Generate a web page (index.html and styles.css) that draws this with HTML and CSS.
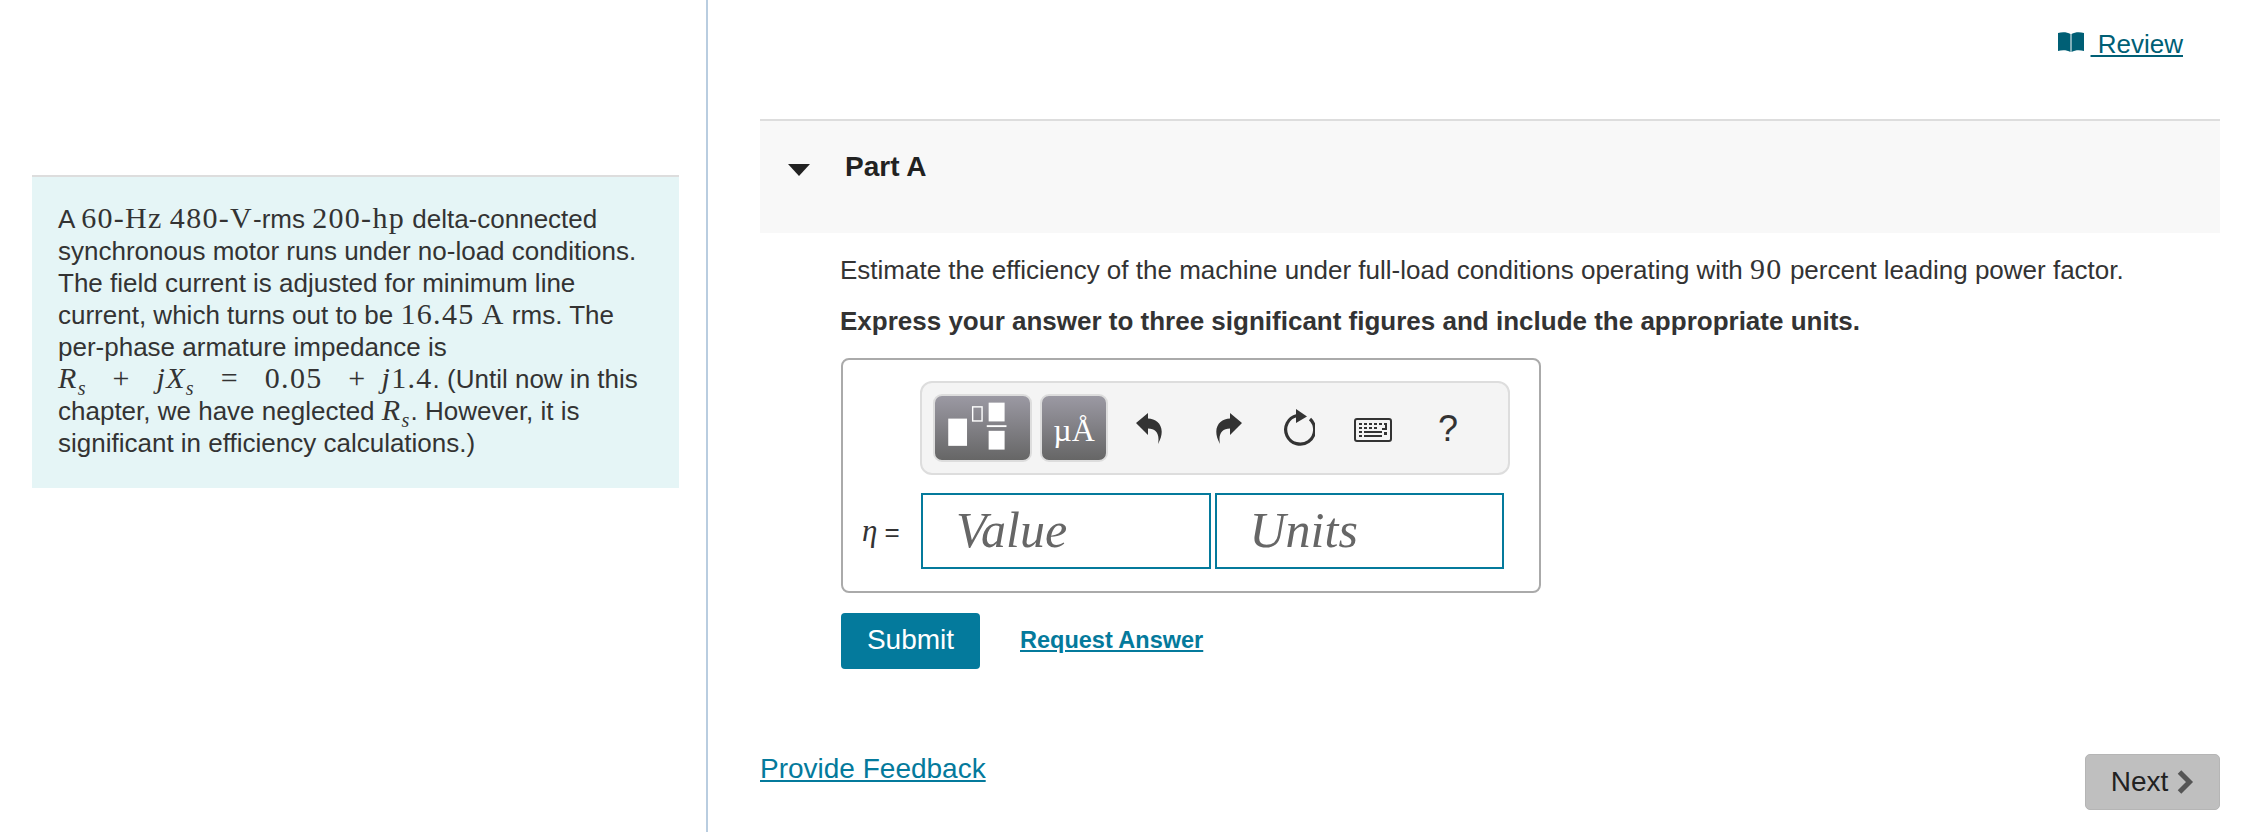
FILE: index.html

```html
<!DOCTYPE html>
<html>
<head>
    <meta charset="UTF-8">
    <title>Part A</title>
    <link rel="stylesheet" href="styles.css">
</head>
<body>

    <div class="page">

        <div class="intro-pane">
            <div class="intro">
                A <span class="math">60-Hz</span> <span class="math">480-V</span>-rms <span class="math">200-hp</span> delta-connected synchronous motor runs under no-load conditions. The field current is adjusted for minimum line current, which turns out to be <span class="math">16.45 A</span> rms. The per-phase armature impedance is<br>
                <span class="math wide"><i>R<sub>s</sub></i> <span class="op">+</span> <i>jX<sub>s</sub></i> <span class="op">=</span> 0.05 <span class="op">+</span><i>j</i>1.4</span>. (Until now in this chapter, we have neglected <span class="math"><i>R<sub>s</sub></i></span>. However, it is significant in efficiency calculations.)
            </div>
        </div>

        <div class="main-pane">

            <div class="review-row">
                <a href="#" class="review">
                    <svg class="book" viewBox="0 0 26 20" width="26" height="20">
                        <path d="M0 1 C4 0 9 0 12.500 2 V20 C9 18 4 18 0 19 Z"/>
                        <path d="M26 1 C22 0 17 0 13.500 2 V20 C17 18 22 18 26 19 Z"/>
                    </svg><span class="review-text">&nbsp;Review</span>
                </a>
            </div>

            <div class="part-head">
                <span class="caret"></span>
                <span class="part-title">Part A</span>
            </div>

            <div class="part-body">
                <p class="question">Estimate the efficiency of the machine under full-load conditions operating with <span class="math">90</span> percent leading power factor.</p>
                <p class="instruction">Express your answer to three significant figures and include the appropriate units.</p>

                <div class="answer-box">
                    <div class="toolbar">
                        <span class="tool-btn tool-templates">
                            <svg viewBox="0 0 98 66" width="94" height="62">
                                <rect x="12" y="23" width="20" height="29" fill="#fff"/>
                                <rect x="38" y="10.500" width="10" height="15" fill="none" stroke="#fff" stroke-width="1.500"/>
                                <rect x="55" y="6" width="17" height="20" fill="#fff"/>
                                <rect x="53" y="30" width="21" height="2" fill="#fff"/>
                                <rect x="55" y="36" width="17" height="20" fill="#fff"/>
                            </svg>
                        </span>
                        <span class="tool-btn tool-units">&micro;&Aring;</span>

                        <svg class="tool tool-undo" viewBox="0 0 28 32" width="28" height="32">
                            <path d="M0 11 L12 1 V6.500 C22 6.500 31 16 22 32 C24 22 20 16.500 12 16.500 V23 Z"/>
                        </svg>
                        <svg class="tool tool-redo" viewBox="0 0 28 32" width="28" height="32">
                            <path d="M28 11 L16 1 V6.500 C6 6.500 -3 16 6 32 C4 22 8 16.500 16 16.500 V23 Z"/>
                        </svg>
                        <svg class="tool tool-reset" viewBox="0 0 32 37" width="32" height="37">
                            <path d="M27 10 A14.500 14.500 0 1 1 14 6.500" fill="none" stroke="#333" stroke-width="3.200"/>
                            <path d="M13 0 L24 7.500 L13 14 Z"/>
                        </svg>
                        <svg class="tool tool-keys" viewBox="0 0 38 24" width="38" height="24">
                            <rect x="1" y="1" width="36" height="22" rx="2" fill="none" stroke="#333" stroke-width="2"/>
                            <path d="M5 5h3v2h-3zM10 5h3v2h-3zM15 5h3v2h-3zM20 5h3v2h-3zM25 5h3v2h-3zM30 5h3v7h-5v-2h3v-3h-1zM5 9h3v2h-3zM10 9h3v2h-3zM15 9h3v2h-3zM20 9h3v2h-3zM5 13h3v2h-3zM10 13h18v2h-18zM30 14h3v3h-3zM5 17h3v2h-3zM10 17h18v2h-18z"/>
                        </svg>
                        <span class="tool-help">?</span>
                    </div>

                    <div class="answer-row">
                        <span class="answer-label"><i>&eta;</i> =</span>
                        <span class="field">Value</span>
                        <span class="field">Units</span>
                    </div>
                </div>

                <div class="actions">
                    <a href="#" class="submit">Submit</a>
                    <a href="#" class="request">Request Answer</a>
                </div>
            </div>

            <div class="footer-row">
                <a href="#" class="feedback">Provide Feedback</a>
                <a href="#" class="next">Next
                    <svg viewBox="0 0 18 26" width="18" height="26">
                        <path d="M3.500 3 L13.500 13 L3.500 23" fill="none" stroke="#555" stroke-width="5"/>
                    </svg>
                </a>
            </div>

        </div>

    </div>

</body>
</html>
```

FILE: styles.css

```css
html {
    font-family: "Liberation Sans", Arial, Helvetica, sans-serif;
    box-sizing: border-box;
}

*,
*:before,
*:after {
    box-sizing: inherit;
}

body {
    margin: 0;
    color: #333;
    font-size: 26px;
    background: #fff;
}

a {
    color: #047a9c;
}

.page {
    display: flex;
    height: 832px;
    overflow: hidden;
}

.math {
    font-family: "Liberation Serif", "Times New Roman", serif;
    font-size: 30px;
    letter-spacing: 1.300px;
    line-height: 0;
}

.math sub {
    font-size: 20px;
    line-height: 0;
}

.math .op {
    margin: 0 15px;
    font-style: normal;
}

.math.wide {
    word-spacing: 2px;
}

/* left column */
.intro-pane {
    flex: none;
    width: 708px;
    padding: 175px 27px 0 32px;
    border-right: 2px solid #b9cde0;
}

.intro {
    padding: 26px 26px 29px;
    line-height: 32px;
    background: #e5f5f6;
    border-top: 2px solid #ddd;
}

/* right column */
.main-pane {
    flex: 1;
    padding: 0 36px 0 52px;
}

.review-row {
    display: flex;
    justify-content: flex-end;
    height: 119px;
    padding: 29px 37px 0 0;
}

.review {
    display: flex;
    align-items: flex-start;
    color: #005f75;
    line-height: 30px;
    text-decoration: none;
}

.review-text {
    margin-left: 7px;
    text-decoration: underline;
}

.book {
    margin-top: 3px;
    fill: #005f75;
}

.part-head {
    display: flex;
    align-items: flex-start;
    height: 114px;
    padding: 30px 0 0 28px;
    background: #f8f8f8;
    border-top: 2px solid #ddd;
}

.caret {
    width: 0;
    height: 0;
    margin-top: 13px;
    border-top: 12px solid #222;
    border-left: 11px solid transparent;
    border-right: 11px solid transparent;
}

.part-title {
    margin-left: 35px;
    color: #222;
    font-size: 28px;
    font-weight: bold;
    line-height: 32px;
}

.part-body {
    padding-left: 80px;
}

.question {
    margin: 21px 0 0;
    line-height: 32px;
}

.instruction {
    margin: 19px 0 0;
    font-weight: bold;
    line-height: 32px;
}

.answer-box {
    width: 700px;
    height: 235px;
    margin: 21px 0 0 1px;
    padding: 21px 31px 0 77px;
    background: #fff;
    border: 2px solid #aaa;
    border-radius: 8px;
}

.toolbar {
    display: flex;
    align-items: center;
    width: 590px;
    height: 94px;
    padding-left: 11px;
    background: #f4f4f4;
    border: 2px solid #ddd;
    border-radius: 12px;
}

.tool-btn {
    display: flex;
    align-items: center;
    justify-content: center;
    height: 68px;
    color: #fff;
    background: linear-gradient(#9b99a3, #666);
    border: 2px solid #ddd;
    border-radius: 9px;
}

.tool-templates {
    width: 99px;
}

.tool-units {
    width: 68px;
    margin-left: 8px;
    padding-top: 4px;
    font-family: "Liberation Serif", serif;
    font-size: 32px;
}

.tool {
    flex: none;
    fill: #333;
}

.tool-undo {
    margin-left: 28px;
}

.tool-redo {
    margin-left: 50px;
}

.tool-reset {
    margin-left: 41px;
    margin-top: -2px;
}

.tool-keys {
    margin-left: 39px;
    margin-top: 4px;
}

.tool-help {
    margin-left: 46px;
    padding-top: 2px;
    font-size: 36px;
    line-height: 40px;
}

.answer-row {
    display: flex;
    align-items: center;
    margin: 18px 0 0 -58px;
}

.answer-label {
    flex: none;
    width: 59px;
    font-size: 26px;
}

.answer-label i {
    font-family: "Liberation Serif", serif;
    font-size: 31px;
}

.field {
    width: 290px;
    height: 76px;
    margin-right: 4px;
    padding-left: 33px;
    color: #666;
    font-family: "Liberation Serif", serif;
    font-size: 50px;
    font-style: italic;
    line-height: 70px;
    border: 2px solid #047a9c;
}

.actions {
    display: flex;
    align-items: center;
    margin: 20px 0 0 1px;
}

.submit {
    width: 139px;
    height: 56px;
    color: #fff;
    font-size: 28px;
    line-height: 54px;
    text-align: center;
    text-decoration: none;
    background: #047a9c;
    border-radius: 4px;
}

.request {
    margin-left: 40px;
    margin-bottom: 2px;
    font-size: 23.500px;
    font-weight: bold;
}

.footer-row {
    display: flex;
    justify-content: space-between;
    align-items: flex-start;
    margin-top: 84px;
}

.feedback {
    font-size: 28px;
    line-height: 32px;
}

.next {
    display: flex;
    align-items: center;
    justify-content: center;
    gap: 8px;
    width: 135px;
    height: 56px;
    margin-top: 1px;
    color: #222;
    font-size: 28px;
    text-decoration: none;
    background: #bfbfbf;
    border: 1px solid #b5b5b5;
    border-radius: 5px;
}
```
